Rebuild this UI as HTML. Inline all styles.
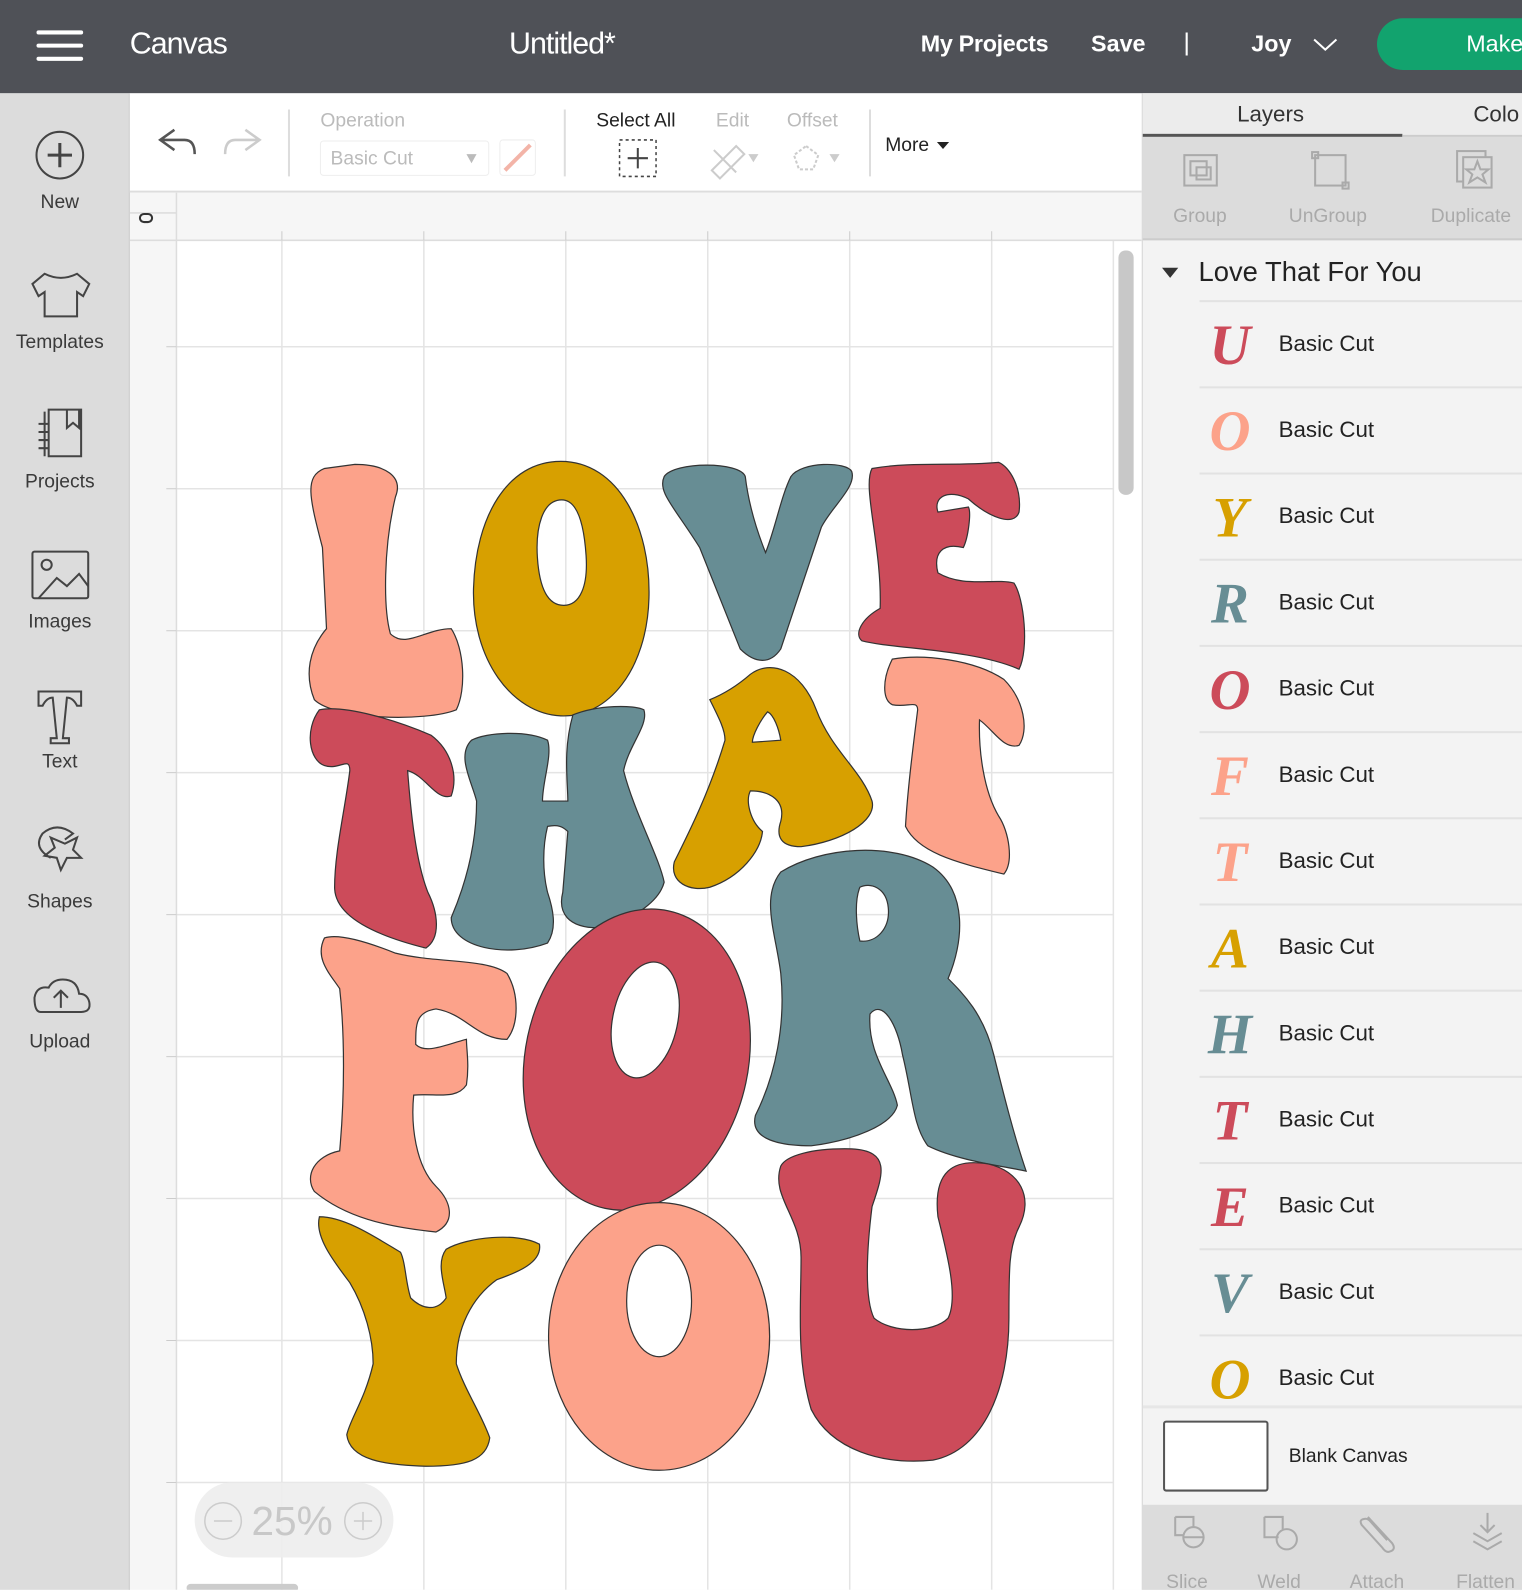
<!DOCTYPE html>
<html><head><meta charset="utf-8"><style>
*{margin:0;padding:0;box-sizing:border-box}
html,body{width:1522px;height:1590px;overflow:hidden;background:#fff;font-family:"Liberation Sans",sans-serif}
#w{position:absolute;left:0;top:0;width:1501px;height:1568px;transform:scale(1.01399);transform-origin:0 0;overflow:hidden}
.a{position:absolute}
.hd{left:0;top:0;width:1501px;height:92px;background:#4f5157}
.hd span{position:absolute;color:#fff;white-space:nowrap}
.side{left:0;top:92px;width:128px;height:1476px;background:#dcdcdc;border-right:1px solid #c8c8c8}
.lab{position:absolute;left:0;width:118px;text-align:center;font-size:19px;color:#3a3a3a}
.tb{left:128px;top:92px;width:998px;height:98px;background:#fff;border-bottom:2px solid #ddd}
.g{color:#bbb}
.rp{left:1126px;top:92px;width:375px;height:1476px;background:#f3f3f3;border-left:1px solid #d6d6d6}
.row{position:absolute;left:56px;width:319px;height:85px;border-bottom:2px solid #e2e2e2}
.row b{position:absolute;left:2px;top:8px;width:56px;text-align:center;font:bold italic 56px "Liberation Serif",serif;line-height:70px}
.row span{position:absolute;left:78px;top:28px;font-size:22px;color:#222}
svg text{font-family:"Liberation Sans",sans-serif}
</style></head><body><div id="w">
<div class="a hd">
 <div class="a" style="left:36px;top:30px;width:46px;height:4px;background:#fff;border-radius:2px"></div>
 <div class="a" style="left:36px;top:43px;width:46px;height:4px;background:#fff;border-radius:2px"></div>
 <div class="a" style="left:36px;top:56px;width:46px;height:4px;background:#fff;border-radius:2px"></div>
 <span style="left:128px;top:27px;font-size:30px;letter-spacing:-1px">Canvas</span>
 <span style="left:502px;top:27px;font-size:30px;letter-spacing:-1px">Untitled*</span>
 <span style="left:908px;top:30px;font-size:23px;font-weight:bold;letter-spacing:-0.3px">My Projects</span>
 <span style="left:1076px;top:30px;font-size:23px;font-weight:bold">Save</span>
 <span style="left:1167px;top:28px;font-size:25px">|</span>
 <span style="left:1234px;top:30px;font-size:23px;font-weight:bold">Joy</span>
 <svg class="a" style="left:1294px;top:36px" width="26" height="16"><path d="M2 3 L13 13 L24 3" stroke="#fff" stroke-width="2" fill="none"/></svg>
 <div class="a" style="left:1358px;top:18px;width:180px;height:51px;background:#12a36e;border-radius:26px"></div>
 <span style="left:1446px;top:30px;font-size:23px">Make</span>
</div>
<div class="a side">
 <svg class="a" style="left:0;top:0" width="128" height="1476" fill="none" stroke="#444" stroke-width="2">
  <circle cx="59" cy="61" r="23"/><path d="M59 49v24M47 61h24" stroke-width="3"/>
  <path d="M44 178 L32 188 L38 200 L44 196 L44 220 L76 220 L76 196 L82 200 L88 188 L76 178 Q60 186 44 178Z"/>
  <path d="M48 358h32v-46h-32zM38 350h10M38 342h10M38 334h10M38 326h10M44 314v44M66 312v18l6-5 6 5v-18"/>
  <rect x="32" y="452" width="55" height="46" rx="2"/><circle cx="46" cy="465" r="5"/><path d="M38 498 L56 478 L66 486 L78 474 L87 486"/>
  <path d="M38 604 v-14 h42 v14 h-4 q-4-8-10-8 l-4 40 h6 v5 h-18 v-5 h6 l-4-40 q-6 0-10 8z"/>
  <path d="M50 754 q-18-10 -8-24 q14-12 30 0 l-8 6 m-14 -2 l4 10 -10 8 12 2 4 12 6-12 14 0 -8-8 4-12 -12 6z"/>
  <path d="M40 906 h40 q10 0 8-10 q-2-8-10-8 q-2-14-16-14 q-10 0-14 8 q-12-2-14 10 q0 14 6 14z M60 902v-16 M53 892l7-7 7 7"/>
 </svg>
 <div class="lab" style="top:97px">New</div>
 <div class="lab" style="top:235px">Templates</div>
 <div class="lab" style="top:373px">Projects</div>
 <div class="lab" style="top:511px">Images</div>
 <div class="lab" style="top:649px">Text</div>
 <div class="lab" style="top:787px">Shapes</div>
 <div class="lab" style="top:925px">Upload</div>
</div>
<div class="a tb">
 <svg class="a" style="left:0;top:0" width="998" height="98" fill="none">
  <path d="M44 36 L30 46 L44 56 M30 46 H54 Q64 46 64 60" stroke="#555" stroke-width="2.5"/>
  <path d="M114 36 L128 46 L114 56 M128 46 H104 Q94 46 94 60" stroke="#ccc" stroke-width="2.5"/>
  <path d="M157 16v66M429 16v66M730 16v66" stroke="#ddd" stroke-width="2"/>
  <rect x="188" y="47" width="166" height="34" rx="3" stroke="#eee"/>
  <path d="M332 60 l5 9 5-9z" fill="#bbb"/>
  <rect x="365" y="46" width="35" height="35" rx="3" stroke="#eee"/>
  <path d="M370 76 L395 51" stroke="#f3b4a8" stroke-width="4"/>
  <rect x="483" y="46" width="36" height="36" stroke="#444" stroke-dasharray="3 3" stroke-width="1.5"/>
  <path d="M501 54v20M491 64h20" stroke="#444" stroke-width="2"/>
  <path d="M574 76 l24-24 8 8 -24 24z M576 56 l22 22" stroke="#ccc" stroke-width="2"/>
  <path d="M610 60 l5 8 5-8z M690 60 l5 8 5-8z" fill="#ccc"/>
  <path d="M667 52 l12 9 -5 14 h-14 l-5-14z" stroke="#ccc" stroke-width="2" stroke-dasharray="3 2"/>
  <path d="M796 48 l6 7 6-7z" fill="#222"/>
 </svg>
 <span class="a g" style="left:188px;top:17px;font-size:19px">Operation</span>
 <span class="a g" style="left:198px;top:54px;font-size:19px">Basic Cut</span>
 <span class="a" style="left:460px;top:17px;font-size:19px;color:#222">Select All</span>
 <span class="a g" style="left:578px;top:17px;font-size:19px">Edit</span>
 <span class="a g" style="left:648px;top:17px;font-size:19px">Offset</span>
 <span class="a" style="left:745px;top:41px;font-size:19px;color:#222">More</span>
</div>
<svg class="a" style="left:128px;top:190px" width="998" height="1378">
 <rect width="998" height="1378" fill="#f6f6f6"/>
 <rect x="46" y="47" width="952" height="1331" fill="#fff"/>
 <g stroke="#e4e4e4" stroke-width="1.5">
  <path d="M150 47V1378M290 47V1378M430 47V1378M570 47V1378M710 47V1378M850 47V1378M970 47V1378"/>
  <path d="M46 152H970M46 292H970M46 432H970M46 572H970M46 712H970M46 852H970M46 992H970M46 1132H970M46 1272H970"/>
 </g>
 <path d="M0 47H998M46 0V1378M0 20H46" stroke="#ddd" stroke-width="1.5"/>
 <g stroke="#ccc"><path d="M150 38v9M290 38v9M430 38v9M570 38v9M710 38v9M850 38v9M36 152h10M36 292h10M36 432h10M36 572h10M36 712h10M36 852h10M36 992h10M36 1132h10M36 1272h10"/></g>
 <rect x="10" y="21" width="12" height="8" rx="4" fill="none" stroke="#333" stroke-width="2"/>
 <rect x="975" y="57" width="15" height="241" rx="7" fill="#c8c8c8"/>
 <rect x="56" y="1372" width="110" height="8" rx="4" fill="#ccc"/>
</svg>
<svg class="a" style="left:0;top:0" width="1126" height="1568" stroke="#333" stroke-width="1.2">
 <path fill="#fca28a" d="M320,462 C300,470 305,490 318,540 L322,620 C305,640 300,665 310,690 C330,710 420,712 450,700 C460,680 458,640 445,620 C420,620 400,640 385,625 C378,600 378,540 390,490 C398,470 380,458 350,458 Z"/>
 <path fill="#d7a000" fill-rule="evenodd" d="M553,455 C610,455 642,520 640,590 C638,660 600,708 553,706 C505,704 465,650 467,580 C469,510 500,455 553,455 Z M554,493 C535,493 528,520 530,550 C532,580 540,597 556,597 C572,597 580,578 578,548 C576,518 570,493 554,493 Z"/>
 <path fill="#678d94" d="M655,470 C648,485 665,500 690,540 L730,640 C745,655 760,655 770,640 L810,520 C820,500 845,480 840,465 C835,455 790,455 780,470 C770,490 765,520 755,545 C745,520 738,495 735,470 C730,455 665,455 655,470 Z"/>
 <path fill="#cc4b5a" d="M860,462 C850,480 870,540 868,600 C850,610 842,625 850,632 C880,640 960,640 1005,660 C1015,640 1010,590 1000,575 C980,570 950,580 925,565 C920,545 930,535 950,540 C955,530 958,505 955,500 L925,505 C920,490 935,482 955,492 C975,510 1000,520 1005,505 C1008,480 995,460 985,456 C940,460 900,455 860,462 Z"/>
 <path fill="#cc4b5a" d="M315,700 C300,720 305,750 320,755 C335,760 345,745 345,760 C340,800 330,840 330,875 C330,900 360,920 420,935 C435,925 432,900 422,880 C410,850 405,800 402,760 C420,765 430,790 445,785 C452,765 445,740 425,725 C390,710 340,695 315,700 Z"/>
 <path fill="#678d94" d="M465,730 C450,745 465,770 470,790 C470,830 460,870 445,905 C445,935 500,945 540,930 C550,915 545,895 540,880 C535,860 535,835 540,815 C550,813 555,815 560,820 L555,880 C550,900 560,915 590,915 C620,910 650,890 655,870 C650,845 625,800 615,760 C620,735 640,715 635,700 C625,695 590,695 565,705 C555,740 560,770 560,790 L535,790 C535,770 545,745 540,730 C520,720 480,722 465,730 Z"/>
 <path fill="#d7a000" fill-rule="evenodd" d="M700,690 C710,710 715,720 715,730 C700,780 680,820 665,850 C660,870 680,880 700,875 C730,865 750,840 752,820 C740,810 735,790 740,780 C760,780 775,790 770,810 C765,825 770,835 790,835 C830,830 865,810 860,790 C850,760 820,740 805,700 C790,660 760,650 740,665 C725,678 710,686 700,690 Z M757,702 C750,710 742,725 742,732 L770,730 C768,718 763,705 757,702 Z"/>
 <path fill="#fca28a" d="M880,650 C870,670 870,690 880,695 C895,698 905,690 905,700 C900,740 895,780 893,815 C905,840 940,850 990,862 C1000,850 995,820 985,805 C970,780 965,740 966,710 C980,720 990,740 1005,735 C1015,720 1010,690 990,670 C960,650 910,645 880,650 Z"/>
 <path fill="#fca28a" d="M320,925 C310,945 325,960 335,975 C340,1020 340,1080 335,1135 C310,1140 300,1160 310,1175 C340,1200 380,1210 430,1215 C450,1205 445,1185 430,1170 C410,1150 405,1110 408,1080 C430,1078 450,1085 460,1070 C463,1050 460,1035 460,1025 C440,1030 420,1040 410,1030 C410,1010 410,998 430,995 C460,1000 470,1025 500,1025 C512,1010 512,980 500,960 C480,945 430,950 390,940 C365,930 335,920 320,925 Z"/>
 <g transform="rotate(12 628 1045)"><ellipse cx="628" cy="1045" rx="110" ry="150" fill="#cc4b5a"/><ellipse cx="628" cy="1005" rx="32" ry="58" fill="#fff"/></g>
 <path fill="#678d94" fill-rule="evenodd" d="M770,860 C750,885 765,920 770,960 C775,1010 765,1060 745,1100 C740,1120 760,1130 800,1130 C840,1125 880,1110 885,1090 C880,1065 855,1040 858,1000 C870,985 885,1010 890,1040 C900,1080 900,1110 915,1130 C945,1145 990,1150 1012,1155 C1000,1120 990,1080 980,1040 C970,1000 950,980 935,965 C950,930 955,880 920,855 C880,830 810,835 770,860 Z M848,875 C842,890 845,915 848,928 C865,930 878,915 876,895 C874,875 858,870 848,875 Z"/>
 <path fill="#d7a000" d="M315,1200 C310,1220 330,1245 345,1265 C360,1290 368,1320 368,1345 C360,1380 345,1400 342,1415 C345,1440 380,1445 420,1446 C460,1446 480,1440 483,1418 C475,1395 458,1370 450,1345 C450,1310 465,1280 490,1262 C510,1255 535,1245 532,1227 C510,1215 460,1220 440,1232 C430,1245 438,1265 440,1280 C430,1295 415,1290 405,1280 C400,1265 400,1245 395,1235 C370,1220 340,1200 315,1200 Z"/>
 <ellipse cx="650" cy="1318" rx="109" ry="132" fill="#fca28a"/><ellipse cx="650" cy="1283" rx="32" ry="55" fill="#fff"/>
 <path fill="#cc4b5a" d="M770,1150 C760,1180 790,1200 790,1240 C790,1290 785,1340 800,1390 C820,1430 870,1445 920,1440 C970,1430 995,1370 995,1300 C995,1250 995,1230 1005,1210 C1020,1180 1005,1155 975,1148 C940,1142 920,1155 925,1200 C935,1240 945,1280 935,1300 C920,1315 880,1315 862,1300 C852,1280 855,1230 860,1190 C870,1160 880,1135 840,1133 C800,1132 775,1140 770,1150 Z"/>
 <g stroke="none"><rect x="192" y="1462" width="196" height="74" rx="37" fill="#ededed" opacity=".9"/></g>
 <g fill="none" stroke="#ccc" stroke-width="1.5"><circle cx="220" cy="1500" r="18"/><circle cx="358" cy="1500" r="18"/><path d="M211 1500h18M349 1500h18M358 1491v18"/></g>
 <text x="248" y="1514" font-size="40" fill="#c8c8c8" stroke="none">25%</text>
</svg>
<div class="a rp">
 <div class="a" style="left:0;top:0;width:375px;height:43px;background:#ececec"></div>
 <span class="a" style="left:93px;top:8px;font-size:22px;color:#333">Layers</span>
 <span class="a" style="left:326px;top:8px;font-size:22px;color:#333">Colo</span>
 <div class="a" style="left:0;top:40px;width:256px;height:3px;background:#555"></div>
 <div class="a" style="left:256px;top:41px;width:119px;height:2px;background:#ccc"></div>
 <div class="a" style="left:0;top:43px;width:375px;height:102px;background:#dcdcdc;border-bottom:2px solid #ccc"></div>
 <svg class="a" style="left:0;top:43px" width="375" height="100" fill="none" stroke="#aaa" stroke-width="2">
  <rect x="41" y="18" width="32" height="30"/><rect x="47" y="24" width="16" height="14"/><rect x="53" y="30" width="14" height="12"/>
  <rect x="170" y="18" width="30" height="30"/><rect x="167" y="15" width="6" height="6"/><rect x="197" y="45" width="6" height="6"/>
  <rect x="310" y="14" width="28" height="30"/><rect x="316" y="20" width="28" height="30" fill="#dcdcdc"/><path d="M330 24l3 8h8l-6 5 3 8-8-5-8 5 3-8-6-5h8z"/>
 </svg>
 <span class="a" style="left:30px;top:111px;font-size:19px;color:#aaa">Group</span>
 <span class="a" style="left:144px;top:111px;font-size:19px;color:#aaa">UnGroup</span>
 <span class="a" style="left:284px;top:111px;font-size:19px;color:#aaa">Duplicate</span>
 <svg class="a" style="left:18px;top:170px" width="20" height="14"><path d="M1 2h16l-8 10z" fill="#333"/></svg>
 <span class="a" style="left:55px;top:161px;font-size:27px;color:#222">Love That For You</span>
 <div class="a" style="left:56px;top:204px;width:319px;height:2px;background:#e2e2e2"></div>
 <div class="row" style="top:206px"><b style="color:#cc4b5a">U</b><span>Basic Cut</span></div>
 <div class="row" style="top:291px"><b style="color:#fca28a">O</b><span>Basic Cut</span></div>
 <div class="row" style="top:376px"><b style="color:#d7a000">Y</b><span>Basic Cut</span></div>
 <div class="row" style="top:461px"><b style="color:#678d94">R</b><span>Basic Cut</span></div>
 <div class="row" style="top:546px"><b style="color:#cc4b5a">O</b><span>Basic Cut</span></div>
 <div class="row" style="top:631px"><b style="color:#fca28a">F</b><span>Basic Cut</span></div>
 <div class="row" style="top:716px"><b style="color:#fca28a">T</b><span>Basic Cut</span></div>
 <div class="row" style="top:801px"><b style="color:#d7a000">A</b><span>Basic Cut</span></div>
 <div class="row" style="top:886px"><b style="color:#678d94">H</b><span>Basic Cut</span></div>
 <div class="row" style="top:971px"><b style="color:#cc4b5a">T</b><span>Basic Cut</span></div>
 <div class="row" style="top:1056px"><b style="color:#cc4b5a">E</b><span>Basic Cut</span></div>
 <div class="row" style="top:1141px"><b style="color:#678d94">V</b><span>Basic Cut</span></div>
 <div class="row" style="top:1226px;border:none"><b style="color:#d7a000">O</b><span>Basic Cut</span></div>
 <div class="a" style="left:0;top:1294px;width:375px;height:3px;background:#e6e6e6"></div>
 <div class="a" style="left:20px;top:1309px;width:104px;height:70px;background:#fff;border:2px solid #555;border-radius:3px"></div>
 <span class="a" style="left:144px;top:1334px;font-size:19px;color:#222">Blank Canvas</span>
 <div class="a" style="left:0;top:1392px;width:375px;height:84px;background:#dcdcdc"></div>
 <svg class="a" style="left:0;top:1392px" width="375" height="84" fill="none" stroke="#aaa" stroke-width="2">
  <path d="M32 12h18v10M32 12v18h8"/><circle cx="50" cy="32" r="10"/><path d="M40 32h20"/>
  <path d="M120 12h18v12M120 12v20h14"/><circle cx="142" cy="34" r="10"/>
  <path d="M222 12 l24 26 q4 6 -2 8 q-4 2 -8-4 l-20-22 q-3-5 2-6 q4-1 7 3 l16 18"/>
  <path d="M340 8v18M333 20l7 7 7-7M326 28l14 8 14-8M326 36l14 8 14-8"/>
 </svg>
 <span class="a" style="left:23px;top:1458px;font-size:19px;color:#aaa">Slice</span>
 <span class="a" style="left:113px;top:1458px;font-size:19px;color:#aaa">Weld</span>
 <span class="a" style="left:204px;top:1458px;font-size:19px;color:#aaa">Attach</span>
 <span class="a" style="left:309px;top:1458px;font-size:19px;color:#aaa">Flatten</span>
</div>
</div></body></html>
